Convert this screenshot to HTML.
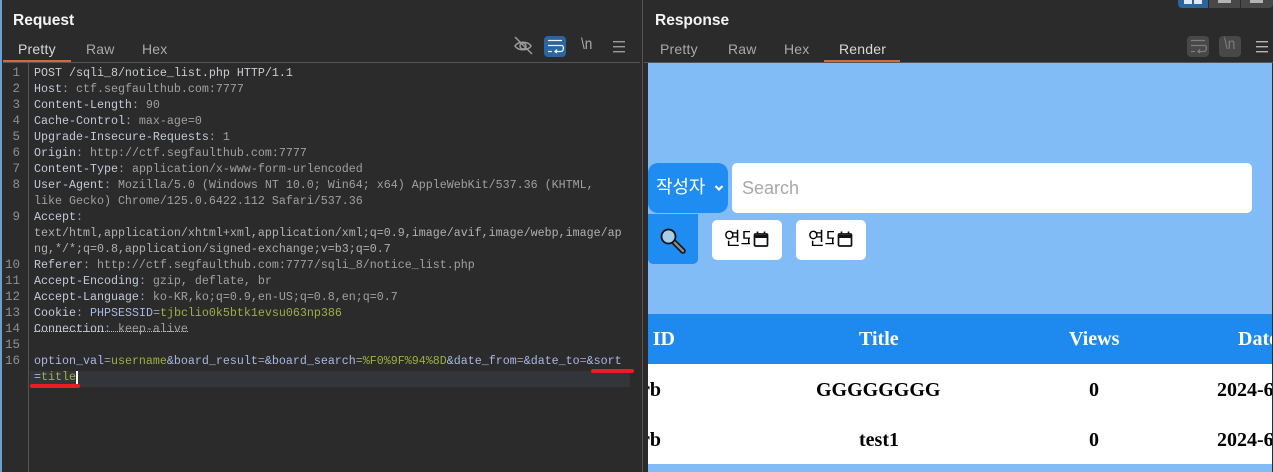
<!DOCTYPE html>
<html><head><meta charset="utf-8">
<style>
html,body{margin:0;padding:0;background:#2b2b2b}
#p{position:relative;width:1273px;height:472px;overflow:hidden;background:#2b2b2b;font-family:"Liberation Sans","Noto Sans CJK KR",sans-serif}
.a{position:absolute}
.t{position:absolute;font-size:14px;color:#a9a9a9;top:41px;line-height:16px;letter-spacing:.2px}
.h{position:absolute;top:12px;font-size:15.5px;font-weight:bold;color:#f4f4f4;line-height:18px}
pre{position:absolute;margin:0;font-family:"Liberation Mono",monospace;font-size:11.67px;line-height:16px;white-space:pre}
#code{left:34px;top:65px;color:#a0a0a0}
#nums{left:4px;top:65px;width:16px;text-align:right;color:#8f8f8f;font-size:12.5px}
b{font-weight:normal;color:#c0cad8}
i{font-style:normal;color:#a9b7e6}
u{text-decoration:none;color:#9bb043}
.ser{position:absolute;font-family:"Liberation Serif",serif;font-weight:bold;font-size:20px;line-height:24px;white-space:nowrap}
.nl{position:absolute;font-size:16px;line-height:20px;transform:scaleX(.85);transform-origin:0 0}
.yr{position:absolute;top:166px;width:26px;height:20px;overflow:hidden;font-size:18px;line-height:20px;color:#000;white-space:nowrap}
</style></head><body><div id="p">
<div class="a" style="left:0;top:0;width:2px;height:472px;background:#6a9fd8"></div>
<div class="h" style="left:13px">Request</div>
<div class="h" style="left:655px">Response</div>
<div class="t" style="left:18px;color:#d8d8d8">Pretty</div>
<div class="t" style="left:86px">Raw</div>
<div class="t" style="left:142px">Hex</div>
<div class="t" style="left:660px">Pretty</div>
<div class="t" style="left:728px">Raw</div>
<div class="t" style="left:784px">Hex</div>
<div class="t" style="left:839px;color:#d8d8d8">Render</div>
<div class="a" style="left:3px;top:62px;width:637px;height:1px;background:#555"></div>
<div class="a" style="left:3px;top:60px;width:68px;height:2px;background:#d4693a"></div>
<div class="a" style="left:644px;top:62px;width:629px;height:1px;background:#555"></div>
<div class="a" style="left:824px;top:60px;width:76px;height:2px;background:#d4693a"></div>
<div class="a" style="left:642px;top:0;width:1px;height:472px;background:#555"></div>
<div class="a" style="left:28px;top:63px;width:1px;height:409px;background:#555"></div>

<svg class="a" style="left:513px;top:36px" width="20" height="20" viewBox="0 0 20 20" fill="none" stroke="#9a9a9a" stroke-width="1.5"><path d="M2 10C5 5 15 5 18 10C15 15 5 15 2 10Z"/><circle cx="10" cy="10" r="3"/><path d="M2 1L19 18"/></svg>
<div class="a" style="left:544px;top:36px;width:22px;height:21px;border-radius:4px;background:#2a659f"></div>
<svg class="a" style="left:544px;top:36px" width="22" height="21" viewBox="0 0 22 21" fill="none" stroke="#eef2f6" stroke-width="1.3"><path d="M4 4.5H18M4 9.5H18C20 9.5 20 15.5 17 15.5H11M13 13.5L11 15.5L13 17M4 15.5H8"/></svg>
<div class="nl" style="left:581px;top:35px;color:#a9a9a9">\n</div>
<svg class="a" style="left:612px;top:40px" width="14" height="13" fill="#9a9a9a"><rect x="1" y="1" width="12" height="1.4"/><rect x="1" y="6" width="12" height="1.4"/><rect x="1" y="11" width="12" height="1.4"/></svg>

<div class="a" style="left:1187px;top:36px;width:22px;height:21px;border-radius:4px;background:#484848"></div>
<svg class="a" style="left:1187px;top:36px" width="22" height="21" viewBox="0 0 22 21" fill="none" stroke="#7d7d7d" stroke-width="1.3"><path d="M4 4.5H18M4 9.5H18C20 9.5 20 15.5 17 15.5H11M13 13.5L11 15.5L13 17M4 15.5H8"/></svg>
<div class="a" style="left:1219px;top:36px;width:22px;height:21px;border-radius:4px;background:#484848"></div>
<div class="nl" style="left:1224px;top:35px;color:#7d7d7d">\n</div>
<svg class="a" style="left:1255px;top:40px" width="14" height="13" fill="#b4b4b4"><rect x="1" y="1" width="12" height="1.4"/><rect x="1" y="6" width="12" height="1.4"/><rect x="1" y="11" width="12" height="1.4"/></svg>

<div class="a" style="left:1178px;top:-4px;width:30px;height:12px;border-radius:0 0 0 4px;background:#2a659f"></div>
<div class="a" style="left:1209px;top:-4px;width:31px;height:12px;background:#484848"></div>
<div class="a" style="left:1241px;top:-4px;width:32px;height:12px;border-radius:0 0 4px 0;background:#484848"></div>
<div class="a" style="left:1184px;top:0;width:8px;height:4px;background:#dfe7ef"></div>
<div class="a" style="left:1194px;top:0;width:8px;height:4px;background:#dfe7ef"></div>
<div class="a" style="left:1218px;top:0;width:13px;height:3px;background:#b4b4b4"></div>
<div class="a" style="left:1250px;top:0;width:13px;height:3px;background:#b4b4b4"></div>

<div class="a" style="left:30px;top:371px;width:600px;height:16px;background:#32363a"></div>
<pre id="nums">1
2
3
4
5
6
7
8

9


10
11
12
13
14
15
16</pre>
<pre id="code"><span style="color:#c8ccd0">POST /sqli_8/notice_list.php HTTP/1.1</span>
<b>Host</b>: ctf.segfaulthub.com:7777
<b>Content-Length</b>: 90
<b>Cache-Control</b>: max-age=0
<b>Upgrade-Insecure-Requests</b>: 1
<b>Origin</b>: http://ctf.segfaulthub.com:7777
<b>Content-Type</b>: application/x-www-form-urlencoded
<b>User-Agent</b>: Mozilla/5.0 (Windows NT 10.0; Win64; x64) AppleWebKit/537.36 (KHTML,
like Gecko) Chrome/125.0.6422.112 Safari/537.36
<b>Accept</b>:
<span style="color:#b0b0b0">text/html,application/xhtml+xml,application/xml;q=0.9,image/avif,image/webp,image/ap
ng,*/*;q=0.8,application/signed-exchange;v=b3;q=0.7</span>
<b>Referer</b>: http://ctf.segfaulthub.com:7777/sqli_8/notice_list.php
<b>Accept-Encoding</b>: gzip, deflate, br
<b>Accept-Language</b>: ko-KR,ko;q=0.9,en-US;q=0.8,en;q=0.7
<b>Cookie</b>: <i>PHPSESSID</i>=<u>tjbclio0k5btk1evsu063np386</u>
<b>Connection</b>: keep-alive

<i>option_val</i>=<u>username</u><i>&amp;board_result</i>=<i>&amp;board_search</i>=<u>%F0%9F%94%8D</u><i>&amp;date_from</i>=<i>&amp;date_to</i>=<i>&amp;sort</i>
<i>=</i><u>title</u></pre>
<div class="a" style="left:34px;top:331px;width:154px;height:0;border-top:1px dotted #bdbdbd"></div>
<div class="a" style="left:76px;top:371px;width:2px;height:16px;background:#fff"></div>
<div class="a" style="left:30px;top:384px;width:50px;height:4px;border-radius:2px;background:#ed1c24"></div>
<div class="a" style="left:591px;top:369px;width:43px;height:4px;border-radius:2px;background:#ed1c24"></div>

<div class="a" style="left:648px;top:63px;width:624px;height:409px;background:#82bcf6;overflow:hidden">
  <div class="a" style="left:0;top:100px;width:80px;height:50px;border-radius:10px;background:#1e8cf0"></div>
  <div class="a" style="left:8px;top:111px;font-size:18px;line-height:26px;color:#fff;letter-spacing:-.2px;white-space:nowrap">작성자</div>
  <svg class="a" style="left:66px;top:121px" width="10" height="8" fill="none" stroke="#fff" stroke-width="2.2"><path d="M1.5 2L5 5.5L8.5 2"/></svg>
  <div class="a" style="left:84px;top:100px;width:520px;height:50px;border-radius:5px;background:#fff"></div>
  <div class="a" style="left:94px;top:114px;font-size:18px;line-height:22px;color:#a8a8a8">Search</div>
  <div class="a" style="left:0;top:151px;width:50px;height:50px;border-radius:0 0 5px 5px;background:#1e8cf0"></div>
  <svg class="a" style="left:11px;top:164px" width="28" height="28" viewBox="0 0 28 28"><path d="M14 14L24 24" stroke="#111" stroke-width="5.5" stroke-linecap="round"/><path d="M15 15L24 24" stroke="#8a8a8a" stroke-width="2.5" stroke-linecap="round"/><circle cx="9.5" cy="9.5" r="7" fill="#a6cdec" stroke="#111" stroke-width="1.8"/></svg>
  <div class="a" style="left:64px;top:157px;width:70px;height:40px;border-radius:5px;background:#fff"></div>
  <div class="a" style="left:148px;top:157px;width:70px;height:40px;border-radius:5px;background:#fff"></div>
  <div class="yr" style="left:76px">연도</div>
  <div class="yr" style="left:160px">연도</div>
  <svg class="a" style="left:105px;top:168px" width="16" height="17" fill="none" stroke="#111" stroke-width="1.7"><rect x="1.5" y="3" width="13" height="12" rx="1"/><path d="M1.5 5.5H14.5" stroke-width="3"/><path d="M4.5 0.5V3M11.5 0.5V3"/></svg>
  <svg class="a" style="left:189px;top:168px" width="16" height="17" fill="none" stroke="#111" stroke-width="1.7"><rect x="1.5" y="3" width="13" height="12" rx="1"/><path d="M1.5 5.5H14.5" stroke-width="3"/><path d="M4.5 0.5V3M11.5 0.5V3"/></svg>

  <div class="a" style="left:0;top:251px;width:624px;height:50px;background:#1e8af0"></div>
  <div class="a" style="left:0;top:301px;width:624px;height:100px;background:#fff"></div>
  <div class="ser" style="right:597px;top:264px;color:#fff;word-spacing:1.5px">Writer ID</div>
  <div class="ser" style="left:211px;top:264px;color:#fff">Title</div>
  <div class="ser" style="left:421px;top:264px;color:#fff">Views</div>
  <div class="ser" style="left:590px;top:264px;color:#fff">Date</div>
  <div class="ser" style="right:611px;top:315px;color:#000">wrb</div>
  <div class="ser" style="left:168px;top:315px;color:#000">GGGGGGGG</div>
  <div class="ser" style="left:441px;top:315px;color:#000">0</div>
  <div class="ser" style="left:569px;top:315px;color:#000">2024-6-11</div>
  <div class="ser" style="right:611px;top:365px;color:#000">wrb</div>
  <div class="ser" style="left:211px;top:365px;color:#000">test1</div>
  <div class="ser" style="left:441px;top:365px;color:#000">0</div>
  <div class="ser" style="left:569px;top:365px;color:#000">2024-6-11</div>
</div>
</div></body></html>
